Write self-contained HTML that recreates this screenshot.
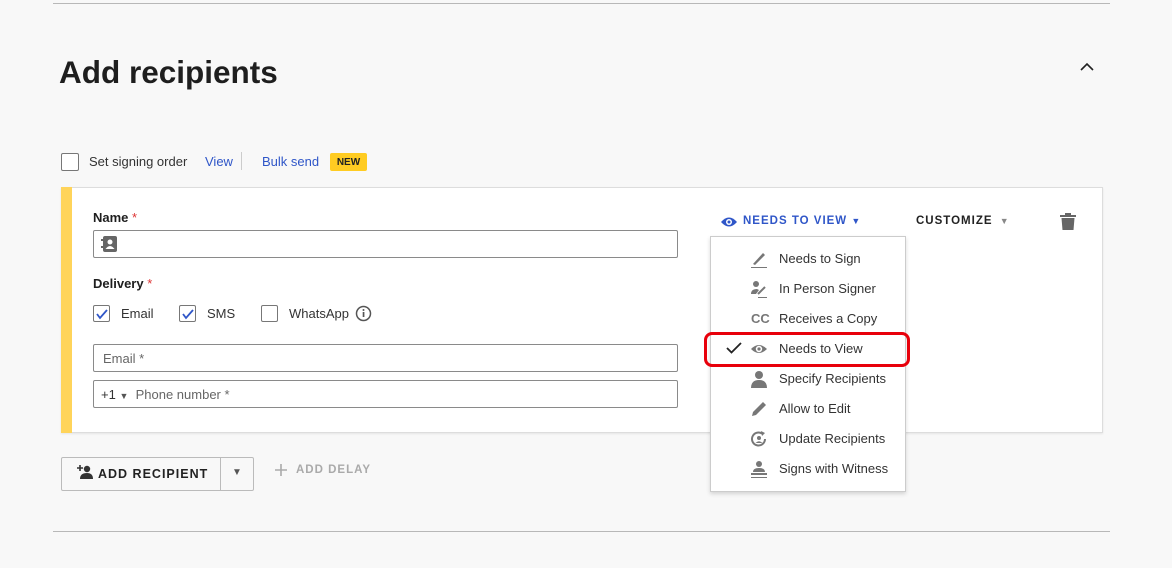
<!DOCTYPE html><html><head><style>
*{box-sizing:border-box;margin:0;padding:0}
body{width:1172px;height:568px;background:#f8f8f8;font-family:"Liberation Sans",sans-serif;position:relative;overflow:hidden;color:#1e1e1e}
.a{position:absolute}
.line{position:absolute;left:53px;width:1057px;height:1px;background:#b8b8b8}
.cb{position:absolute;width:17px;height:17px;border:1px solid #777;background:#fff;border-radius:2px}
.inp{position:absolute;left:93px;width:585px;height:28px;border:1px solid #8a8a8a;border-radius:2px;background:#fff;font-size:13px;color:#666}
.mi{position:absolute;left:779px;font-size:13px;color:#333}
.ic{position:absolute;left:750px;width:18px;height:18px}
</style></head><body>
<div class="line" style="top:3px"></div>
<div class="line" style="top:531px"></div>
<div class="a" style="left:59px;top:54px;font-size:31.5px;font-weight:bold;color:#1e1e1e">Add recipients</div>
<svg class="a" style="left:1080px;top:62px" width="14" height="10"><path d="M1 8 L7 2 L13 8" fill="none" stroke="#222" stroke-width="1.6"/></svg>
<div class="cb" style="left:61px;top:153px;width:18px;height:18px"></div>
<div class="a" style="left:89px;top:154px;font-size:13px;color:#333">Set signing order</div>
<div class="a" style="left:205px;top:154px;font-size:13px;color:#2f56c8">View</div>
<div class="a" style="left:241px;top:152px;width:1px;height:18px;background:#ccc"></div>
<div class="a" style="left:262px;top:154px;font-size:13px;color:#2f56c8">Bulk send</div>
<div class="a" style="left:330px;top:153px;width:37px;height:18px;background:#ffcc22;border-radius:2px;font-size:10px;font-weight:bold;text-align:center;line-height:19px;color:#222">NEW</div>
<div class="a" style="left:61px;top:187px;width:1042px;height:246px;background:#fff;border:1px solid #ddd;box-shadow:0 1px 2px rgba(0,0,0,.08)"></div>
<div class="a" style="left:61px;top:187px;width:11px;height:246px;background:#ffd45a"></div>
<div class="a" style="left:93px;top:210px;font-size:13px;font-weight:bold">Name <span style="color:#d33;font-weight:normal">*</span></div>
<div class="inp" style="top:230px"></div>
<svg class="a" style="left:101px;top:236px" width="16" height="16"><rect x="2" y="0" width="14" height="16" rx="2" fill="#666"/><circle cx="9" cy="6" r="2.5" fill="#fff"/><path d="M4.5 13 Q9 7 13.5 13Z" fill="#fff"/><rect x="0" y="3" width="2" height="2" fill="#666"/><rect x="0" y="10" width="2" height="2" fill="#666"/></svg>
<div class="a" style="left:93px;top:276px;font-size:13px;font-weight:bold">Delivery <span style="color:#d33;font-weight:normal">*</span></div>
<div class="cb" style="left:93px;top:305px"></div>
<svg class="a" style="left:95px;top:308px" width="14" height="12"><path d="M2 6 L5 10 L12 2" fill="none" stroke="#2f56c8" stroke-width="1.8"/></svg>
<div class="a" style="left:121px;top:306px;font-size:13px;color:#333">Email</div>
<div class="cb" style="left:179px;top:305px"></div>
<svg class="a" style="left:181px;top:308px" width="14" height="12"><path d="M2 6 L5 10 L12 2" fill="none" stroke="#2f56c8" stroke-width="1.8"/></svg>
<div class="a" style="left:207px;top:306px;font-size:13px;color:#333">SMS</div>
<div class="cb" style="left:261px;top:305px"></div>
<div class="a" style="left:289px;top:306px;font-size:13px;color:#333">WhatsApp</div>
<svg class="a" style="left:355px;top:305px" width="17" height="17"><circle cx="8.5" cy="8.5" r="7" fill="none" stroke="#555" stroke-width="1.5"/><rect x="7.7" y="7" width="1.7" height="5" fill="#555"/><circle cx="8.5" cy="5" r="1" fill="#555"/></svg>
<div class="inp" style="top:344px;padding:6px 9px">Email *</div>
<div class="inp" style="top:380px;padding:6px 7px"><span style="color:#333">+1</span> <span style="font-size:9px;color:#555">▼</span>&nbsp; Phone number *</div>
<svg class="a" style="left:720px;top:215px" width="18" height="14"><path d="M1 7 Q9 -2 17 7 Q9 16 1 7Z" fill="#2f56c8"/><circle cx="9" cy="7" r="3" fill="#fff"/><circle cx="9" cy="7" r="1.5" fill="#2f56c8"/></svg>
<div class="a" style="left:743px;top:215px;font-size:11.5px;font-weight:bold;color:#2f56c8;letter-spacing:1px">NEEDS TO VIEW <span style="font-size:9px">▼</span></div>
<div class="a" style="left:916px;top:215px;font-size:11.5px;font-weight:bold;color:#222;letter-spacing:1px">CUSTOMIZE <span style="font-size:9px;color:#888;margin-left:3px">▼</span></div>
<svg class="a" style="left:1060px;top:213px" width="16" height="18"><rect x="0" y="2" width="16" height="2" fill="#666"/><rect x="5" y="0" width="6" height="2" fill="#666"/><path d="M1.5 5 H14.5 L13.5 17 H2.5Z" fill="#666"/></svg>
<div class="a" style="left:710px;top:236px;width:196px;height:256px;background:#fff;border:1px solid #ccc;box-shadow:0 2px 4px rgba(0,0,0,.15)"></div>
<div class="a" style="left:704px;top:332px;width:206px;height:35px;border:3px solid #e8000b;border-radius:8px"></div>
<svg class="ic" style="top:250px"><path d="M3 14 L13 3 L15 5 L5 15Z" fill="#777"/><rect x="1" y="17" width="16" height="1" fill="#777"/></svg>
<svg class="ic" style="top:280px"><circle cx="6" cy="4" r="3" fill="#777"/><path d="M1 14 Q1 9 7 9 L9 10 L6 14Z" fill="#777"/><path d="M8 14 L15 7" stroke="#777" stroke-width="2"/><rect x="8" y="17" width="9" height="1" fill="#777"/></svg>
<div class="a" style="left:751px;top:311px;font-size:13px;font-weight:bold;color:#777">CC</div>
<svg class="a" style="left:726px;top:341px" width="16" height="14"><path d="M1 7 L5.5 11.5 L15 2" fill="none" stroke="#222" stroke-width="1.8"/></svg>
<svg class="ic" style="top:340px"><path d="M1 9 Q9 1 17 9 Q9 17 1 9Z" fill="#777"/><circle cx="9" cy="9" r="3.2" fill="#fff"/><circle cx="9" cy="9" r="1.6" fill="#777"/></svg>
<svg class="ic" style="top:370px"><circle cx="9" cy="5" r="4" fill="#777"/><path d="M1 18 Q1 10 9 10 Q17 10 17 18Z" fill="#777"/></svg>
<svg class="ic" style="top:400px"><path d="M2 16 L3 12 L13 2 L16 5 L6 15Z" fill="#777"/></svg>
<svg class="ic" style="top:430px"><path d="M15 9 A6.5 6.5 0 1 1 12 3.5" fill="none" stroke="#777" stroke-width="2"/><path d="M11 1 L15 3 L12 6Z" fill="#777"/><circle cx="9" cy="8" r="2" fill="#777"/><path d="M5.5 13 Q9 9.5 12.5 13Z" fill="#777"/></svg>
<svg class="ic" style="top:460px"><circle cx="9" cy="4" r="3" fill="#777"/><path d="M3 12 Q3 8 9 8 Q15 8 15 12Z" fill="#777"/><rect x="1" y="13" width="16" height="2" fill="#777"/><rect x="1" y="17" width="16" height="1" fill="#777"/></svg>
<div class="mi" style="top:251px">Needs to Sign</div>
<div class="mi" style="top:281px">In Person Signer</div>
<div class="mi" style="top:311px">Receives a Copy</div>
<div class="mi" style="top:341px">Needs to View</div>
<div class="mi" style="top:371px">Specify Recipients</div>
<div class="mi" style="top:401px">Allow to Edit</div>
<div class="mi" style="top:431px">Update Recipients</div>
<div class="mi" style="top:461px">Signs with Witness</div>
<div class="a" style="left:61px;top:457px;width:193px;height:34px;border:1px solid #bbb;background:#f8f8f8;border-radius:2px"></div>
<div class="a" style="left:220px;top:457px;width:1px;height:34px;background:#bbb"></div>
<svg class="a" style="left:75px;top:464px" width="18" height="16"><path d="M2 4 H8 M5 1 V7" stroke="#333" stroke-width="1.6"/><circle cx="12" cy="5" r="3.2" fill="#333"/><path d="M5 15 Q5 9 12 9 Q18 9 18 15Z" fill="#333"/></svg>
<div class="a" style="left:98px;top:467px;font-size:12.5px;font-weight:bold;letter-spacing:1px;color:#222">ADD RECIPIENT</div>
<div class="a" style="left:232px;top:467px;font-size:10px;color:#555">▼</div>
<svg class="a" style="left:274px;top:463px" width="14" height="14"><path d="M7 1 V13 M1 7 H13" stroke="#aaa" stroke-width="1.6"/></svg>
<div class="a" style="left:296px;top:464px;font-size:11.5px;font-weight:bold;letter-spacing:1px;color:#aaa">ADD DELAY</div>
</body></html>
